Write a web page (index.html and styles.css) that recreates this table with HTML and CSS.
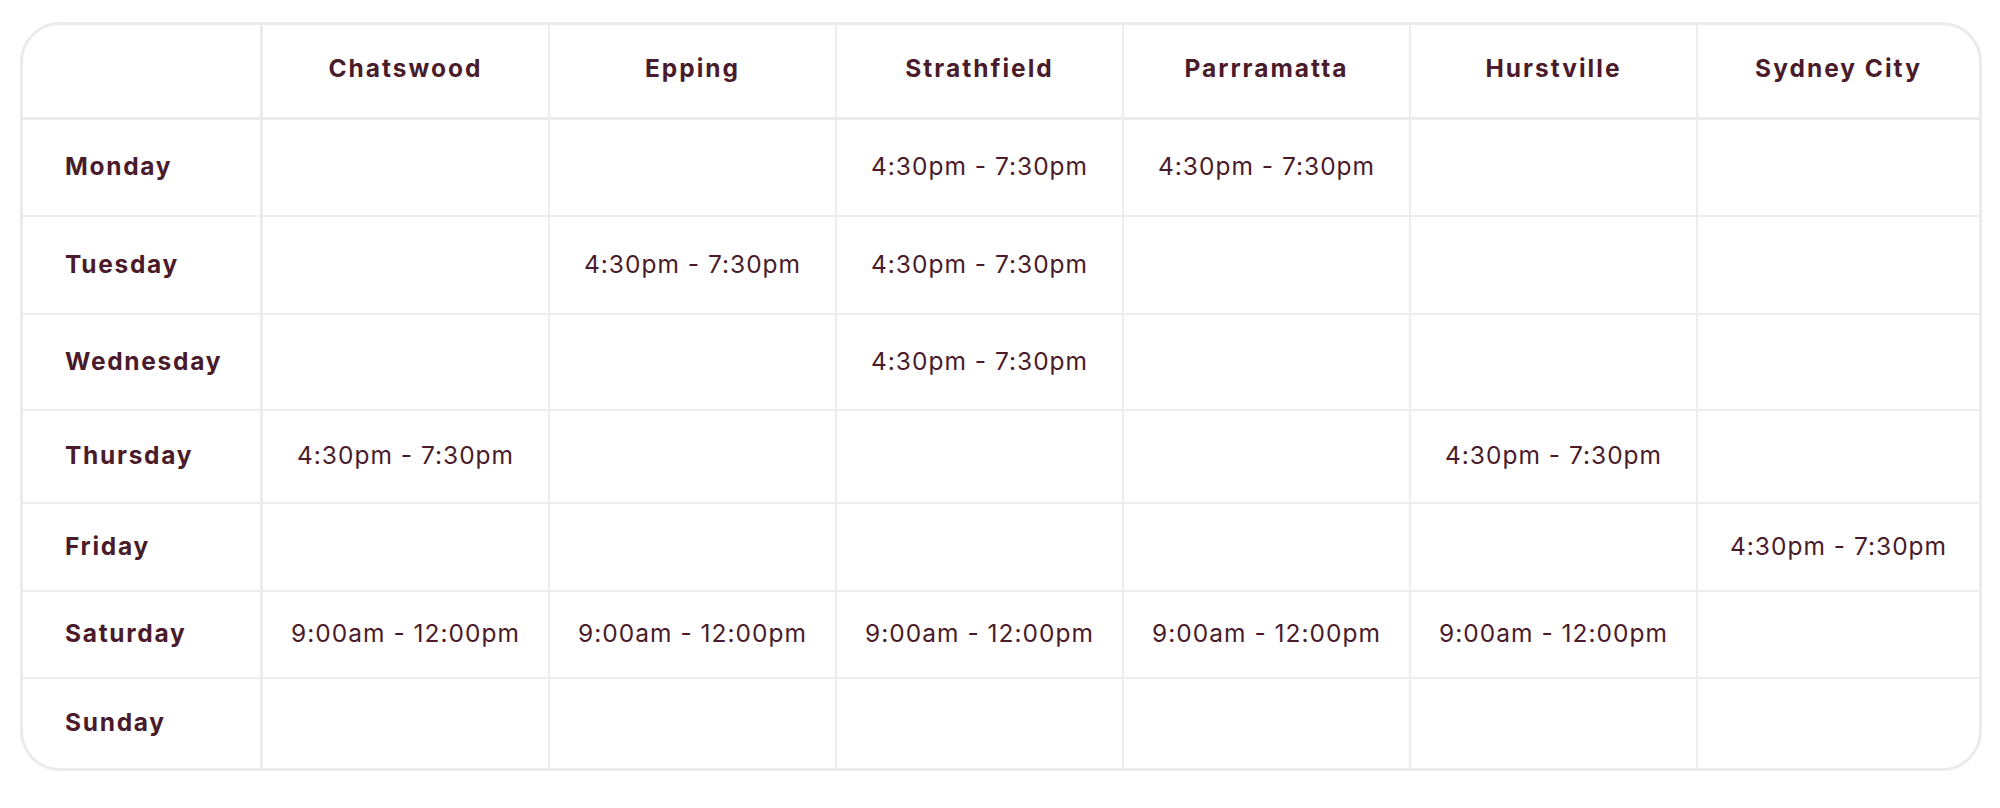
FILE: index.html
```html
<!DOCTYPE html>
<html lang="en">
<head>
<meta charset="utf-8">
<title>Class Schedule</title>
<link rel="stylesheet" href="styles.css">
</head>
<body>
<div class="page">
  <div class="card">
    <div class="grid">
      <div class="cell head corner"></div>
      <div class="cell head">Chatswood</div>
      <div class="cell head">Epping</div>
      <div class="cell head">Strathfield</div>
      <div class="cell head">Parrramatta</div>
      <div class="cell head">Hurstville</div>
      <div class="cell head last">Sydney City</div>

      <div class="cell day">Monday</div>
      <div class="cell"></div>
      <div class="cell"></div>
      <div class="cell">4:30pm - 7:30pm</div>
      <div class="cell">4:30pm - 7:30pm</div>
      <div class="cell"></div>
      <div class="cell last"></div>

      <div class="cell day">Tuesday</div>
      <div class="cell"></div>
      <div class="cell">4:30pm - 7:30pm</div>
      <div class="cell">4:30pm - 7:30pm</div>
      <div class="cell"></div>
      <div class="cell"></div>
      <div class="cell last"></div>

      <div class="cell day">Wednesday</div>
      <div class="cell"></div>
      <div class="cell"></div>
      <div class="cell">4:30pm - 7:30pm</div>
      <div class="cell"></div>
      <div class="cell"></div>
      <div class="cell last"></div>

      <div class="cell day">Thursday</div>
      <div class="cell">4:30pm - 7:30pm</div>
      <div class="cell"></div>
      <div class="cell"></div>
      <div class="cell"></div>
      <div class="cell">4:30pm - 7:30pm</div>
      <div class="cell last"></div>

      <div class="cell day">Friday</div>
      <div class="cell"></div>
      <div class="cell"></div>
      <div class="cell"></div>
      <div class="cell"></div>
      <div class="cell"></div>
      <div class="cell last">4:30pm - 7:30pm</div>

      <div class="cell day">Saturday</div>
      <div class="cell">9:00am - 12:00pm</div>
      <div class="cell">9:00am - 12:00pm</div>
      <div class="cell">9:00am - 12:00pm</div>
      <div class="cell">9:00am - 12:00pm</div>
      <div class="cell">9:00am - 12:00pm</div>
      <div class="cell last"></div>

      <div class="cell day bottom">Sunday</div>
      <div class="cell bottom"></div>
      <div class="cell bottom"></div>
      <div class="cell bottom"></div>
      <div class="cell bottom"></div>
      <div class="cell bottom"></div>
      <div class="cell bottom last"></div>
    </div>
  </div>
</div>
</body>
</html>
```

FILE: styles.css
```css
* {
  box-sizing: border-box;
}

html, body {
  margin: 0;
  padding: 0;
  background: #ffffff;
}

body {
  font-family: Inter, "Liberation Sans", Arial, sans-serif;
  color: #4a1b2a;
}

.page {
  padding: 22px 18px 0 20px;
}

.card {
  width: 1962px;
  border: 3px solid #ebebeb;
  border-radius: 40px;
  overflow: hidden;
  background: #ffffff;
}

.grid {
  display: grid;
  grid-template-columns: 240px repeat(5, 287px) 1fr;
  grid-template-rows: 95px 97px 98px 96px 93px 88px 87px 89px;
}

.cell {
  display: flex;
  align-items: center;
  justify-content: center;
  padding-bottom: 3px;
  border-right: 2px solid #ededed;
  border-bottom: 2px solid #ededed;
  font-size: 24.5px;
  font-weight: 400;
  letter-spacing: 1px;
  white-space: nowrap;
}

.cell.last {
  border-right: none;
}

.cell.bottom {
  border-bottom: none;
}

.head {
  border-bottom: 3px solid #ebebeb;
  font-weight: 700;
  padding-bottom: 6px;
  letter-spacing: 2px;
}

.day {
  justify-content: flex-start;
  padding-left: 42px;
  font-weight: 700;
  letter-spacing: 1.7px;
  border-right: 3px solid #ebebeb;
}

.corner {
  border-right: 3px solid #ebebeb;
}
```
